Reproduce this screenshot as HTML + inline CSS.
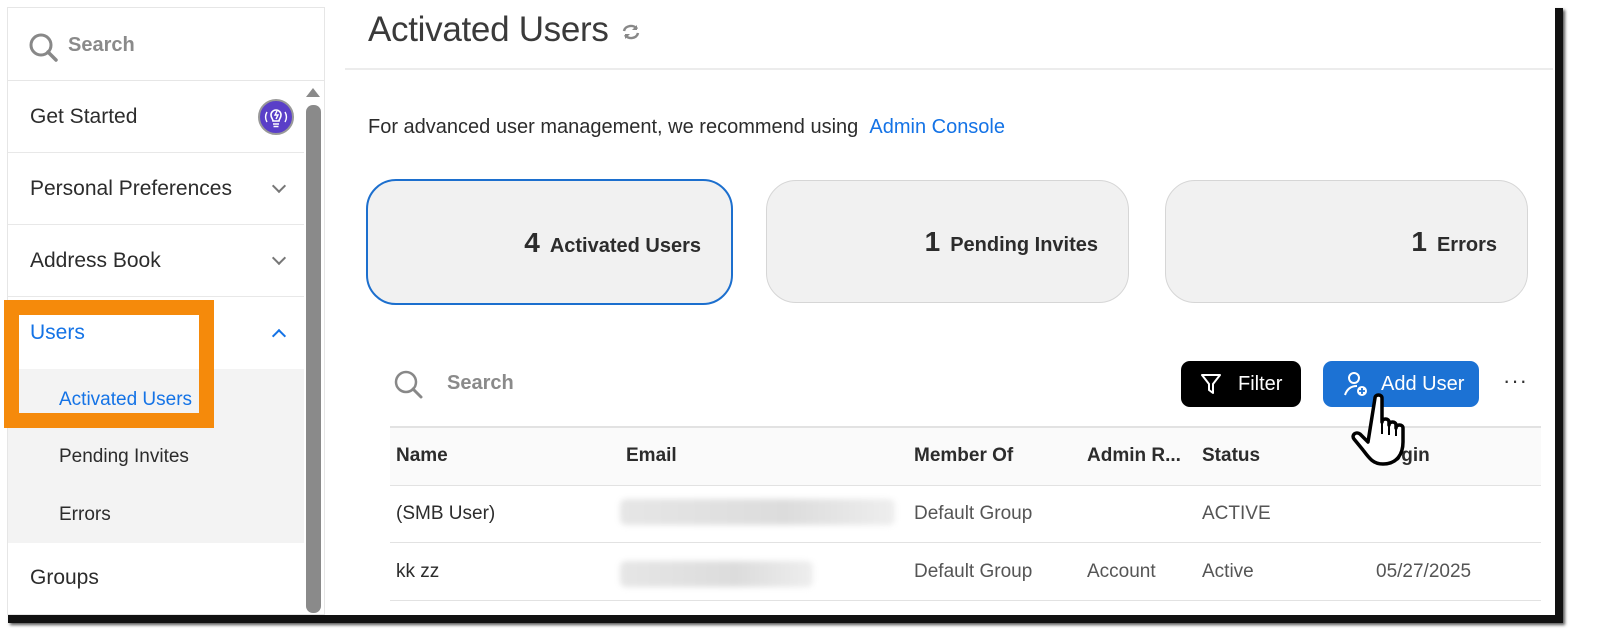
<!DOCTYPE html>
<html><head><meta charset="utf-8"><style>
*{box-sizing:border-box;margin:0;padding:0}
body{width:1611px;height:643px;background:#fff;font-family:"Liberation Sans",sans-serif;position:relative;overflow:hidden;color:#222}
.abs{position:absolute}
.frame{left:0;top:0;width:1555px;height:615px;background:#fff;box-shadow:8px 8px 0 #111, 10px 10px 3px #555}
.side{left:7px;top:7px;width:318px;height:608px;border:1px solid #e6e6e6;background:#fff}
.nav{position:absolute;left:0;width:296px;border-bottom:1px solid #e8e8e8;font-size:21px;color:#2c2c2c;padding-left:22px}
.sub{position:absolute;left:0;width:296px;background:#f3f3f3;font-size:19px;color:#2c2c2c;padding-left:51px}
.chev{position:absolute;right:20px;width:10px;height:10px;border-right:2px solid #777;border-bottom:2px solid #777;transform:rotate(45deg)}
.card{position:absolute;background:#f1f1f1;border:1px solid #d6d6d6;border-radius:30px;text-align:right;font-size:20px;font-weight:bold;color:#2c2c2c;padding-right:30px;line-height:122px}
.card b{font-size:28px;margin-right:10px}
.th{position:absolute;top:445px;font-size:19px;font-weight:bold;color:#2c2c2c}
.td{position:absolute;font-size:19px;color:#555}
.hl{position:absolute;left:390px;width:1151px;height:1px;background:#e2e2e2}
.blur{position:absolute;height:26px;background:linear-gradient(90deg,#e6e6e6,#dcdcdc 60%,#eee);border-radius:6px;filter:blur(3px)}
</style></head><body>
<div class="abs frame"></div>
<div class="abs side">
 <div style="position:absolute;left:0;top:0;width:316px;height:73px;border-bottom:1px solid #e6e6e6"></div>
 <svg class="abs" style="left:20px;top:24px" width="32" height="32" viewBox="0 0 32 32"><circle cx="13" cy="13" r="10" fill="none" stroke="#888" stroke-width="3"/><line x1="20" y1="20" x2="28" y2="28" stroke="#888" stroke-width="3.5" stroke-linecap="round"/></svg>
 <div class="abs" style="left:60px;top:26px;font-size:20px;color:#8a8a8a;font-weight:bold">Search</div>
 <div class="nav" style="top:73px;height:72px;line-height:72px">Get Started
  <svg class="abs" style="left:250px;top:18px" width="36" height="36" viewBox="0 0 36 36"><circle cx="18" cy="18" r="17" fill="#5a3fc8" stroke="#999" stroke-width="2"/><path d="M13 16a5 5 0 1 1 10 0c0 3-2 4-2 6h-6c0-2-2-3-2-6z" fill="none" stroke="#fff" stroke-width="1.6"/><path d="M15 25h6M15.5 27.5h5" stroke="#fff" stroke-width="1.6"/><path d="M19 12l-2 4h3l-2 4" fill="none" stroke="#fff" stroke-width="1.4"/><path d="M9 13a10 10 0 0 0 0 10M27 13a10 10 0 0 1 0 10" fill="none" stroke="#fff" stroke-width="1.4"/></svg></div>
 <div class="nav" style="top:145px;height:72px;line-height:72px">Personal Preferences<span class="chev" style="top:28px"></span></div>
 <div class="nav" style="top:217px;height:72px;line-height:72px">Address Book<span class="chev" style="top:28px"></span></div>
 <div class="nav" style="top:289px;height:72px;color:#1473e6;border:none;line-height:72px">Users<span class="chev" style="top:34px;border-color:#1473e6;transform:rotate(-135deg)"></span></div>
 <div class="sub" style="top:361px;height:59px;line-height:62px;color:#1473e6">Activated Users</div>
 <div class="sub" style="top:420px;height:58px;line-height:58px">Pending Invites</div>
 <div class="sub" style="top:478px;height:57px;line-height:57px">Errors</div>
 <div class="nav" style="top:535px;height:70px;line-height:70px;border:none">Groups</div>
 <div class="abs" style="left:298px;top:97px;width:15px;height:508px;background:#8a8a8a;border-radius:7px"></div>
 <div class="abs" style="left:298px;top:80px;width:0;height:0;border-left:7px solid transparent;border-right:7px solid transparent;border-bottom:9px solid #8a8a8a"></div>
</div>
<div class="abs" style="left:4px;top:300px;width:210px;height:128px;border:15px solid #f58a0b"></div>
<div class="abs" style="left:368px;top:10px;font-size:35px;color:#3a3a3a;font-weight:300;letter-spacing:-0.3px">Activated Users</div>
<svg class="abs" style="left:620px;top:21px" width="22" height="22" viewBox="0 0 22 22"><path d="M4 10a7 6 0 0 1 13-2M18 12a7 6 0 0 1-13 2" fill="none" stroke="#888" stroke-width="2.5"/><path d="M17 4v5h-5z" fill="#888"/><path d="M5 18v-5h5z" fill="#888"/></svg>
<div class="abs" style="left:345px;top:68px;width:1208px;height:2px;background:#ececec"></div>
<div class="abs" style="left:368px;top:116px;font-size:20px;color:#2c2c2c">For advanced user management, we recommend using&nbsp;&nbsp;<span style="color:#1473e6">Admin Console</span></div>
<div class="card" style="left:366px;top:179px;width:367px;height:126px;border:2px solid #1c6fce;line-height:124px"><b>4</b>Activated Users</div>
<div class="card" style="left:766px;top:180px;width:363px;height:123px"><b>1</b>Pending Invites</div>
<div class="card" style="left:1165px;top:180px;width:363px;height:123px"><b>1</b>Errors</div>
<svg class="abs" style="left:393px;top:369px" width="32" height="32" viewBox="0 0 32 32"><circle cx="13" cy="13" r="10" fill="none" stroke="#888" stroke-width="2.5"/><line x1="20" y1="20" x2="28" y2="28" stroke="#888" stroke-width="3" stroke-linecap="round"/></svg>
<div class="abs" style="left:447px;top:372px;font-size:20px;color:#8a8a8a;font-weight:bold">Search</div>
<div class="abs" style="left:1181px;top:361px;width:120px;height:46px;background:#000;border-radius:9px;color:#fff;font-size:20px;line-height:46px;padding-left:57px">Filter
 <svg class="abs" style="left:18px;top:11px" width="24" height="24" viewBox="0 0 24 24"><path d="M3 3h18l-7 9v9l-4-3v-6z" fill="none" stroke="#fff" stroke-width="2" stroke-linejoin="round"/></svg></div>
<div class="abs" style="left:1323px;top:361px;width:156px;height:46px;background:#1c72d4;border-radius:9px;color:#fff;font-size:20px;line-height:46px;padding-left:58px">Add User
 <svg class="abs" style="left:20px;top:10px" width="28" height="28" viewBox="0 0 28 28"><circle cx="11" cy="7" r="5" fill="none" stroke="#fff" stroke-width="2"/><path d="M2 24c2-6 6-9 12-9" fill="none" stroke="#fff" stroke-width="2"/><circle cx="19" cy="20" r="5" fill="#fff"/><path d="M19 17v6M16 20h6" stroke="#1c72d4" stroke-width="1.8"/></svg></div>
<div class="abs" style="left:1503px;top:368px;font-size:22px;color:#333;letter-spacing:1px">···</div>
<div class="abs" style="left:390px;top:427px;width:1151px;height:58px;background:#fafafa"></div>
<div class="hl" style="top:426px;height:2px"></div><div class="hl" style="top:485px"></div><div class="hl" style="top:542px"></div><div class="hl" style="top:600px"></div>
<div class="th" style="left:396px">Name</div><div class="th" style="left:626px">Email</div><div class="th" style="left:914px">Member Of</div><div class="th" style="left:1087px">Admin R...</div><div class="th" style="left:1202px">Status</div><div class="th" style="left:1378px">Login</div>
<div class="td" style="left:396px;top:503px;color:#2c2c2c">(SMB User)</div><div class="blur" style="left:620px;top:499px;width:275px"></div><div class="td" style="left:914px;top:503px">Default Group</div><div class="td" style="left:1202px;top:503px">ACTIVE</div>
<div class="td" style="left:396px;top:561px;color:#2c2c2c">kk zz</div><div class="blur" style="left:620px;top:561px;width:193px"></div><div class="td" style="left:914px;top:561px">Default Group</div><div class="td" style="left:1087px;top:561px">Account</div><div class="td" style="left:1202px;top:561px">Active</div><div class="td" style="left:1376px;top:561px">05/27/2025</div>
<svg class="abs" style="left:1350px;top:392px" width="66" height="78" viewBox="0 0 66 78"><path d="M25 6c0-4 7-4 7 0v24c0-4 7-4 7 0v3c0-4 7-4 7 0v3c0-4 7-4 7 0v14c0 12-6 22-20 22c-10 0-14-6-20-14l-9-11c-3-4 2-8 6-5l8 8z" fill="#fff" stroke="#000" stroke-width="3.5" stroke-linejoin="round"/><path d="M32 30v12M39 33v10M46 36v8" stroke="#000" stroke-width="2"/></svg>
</body></html>
